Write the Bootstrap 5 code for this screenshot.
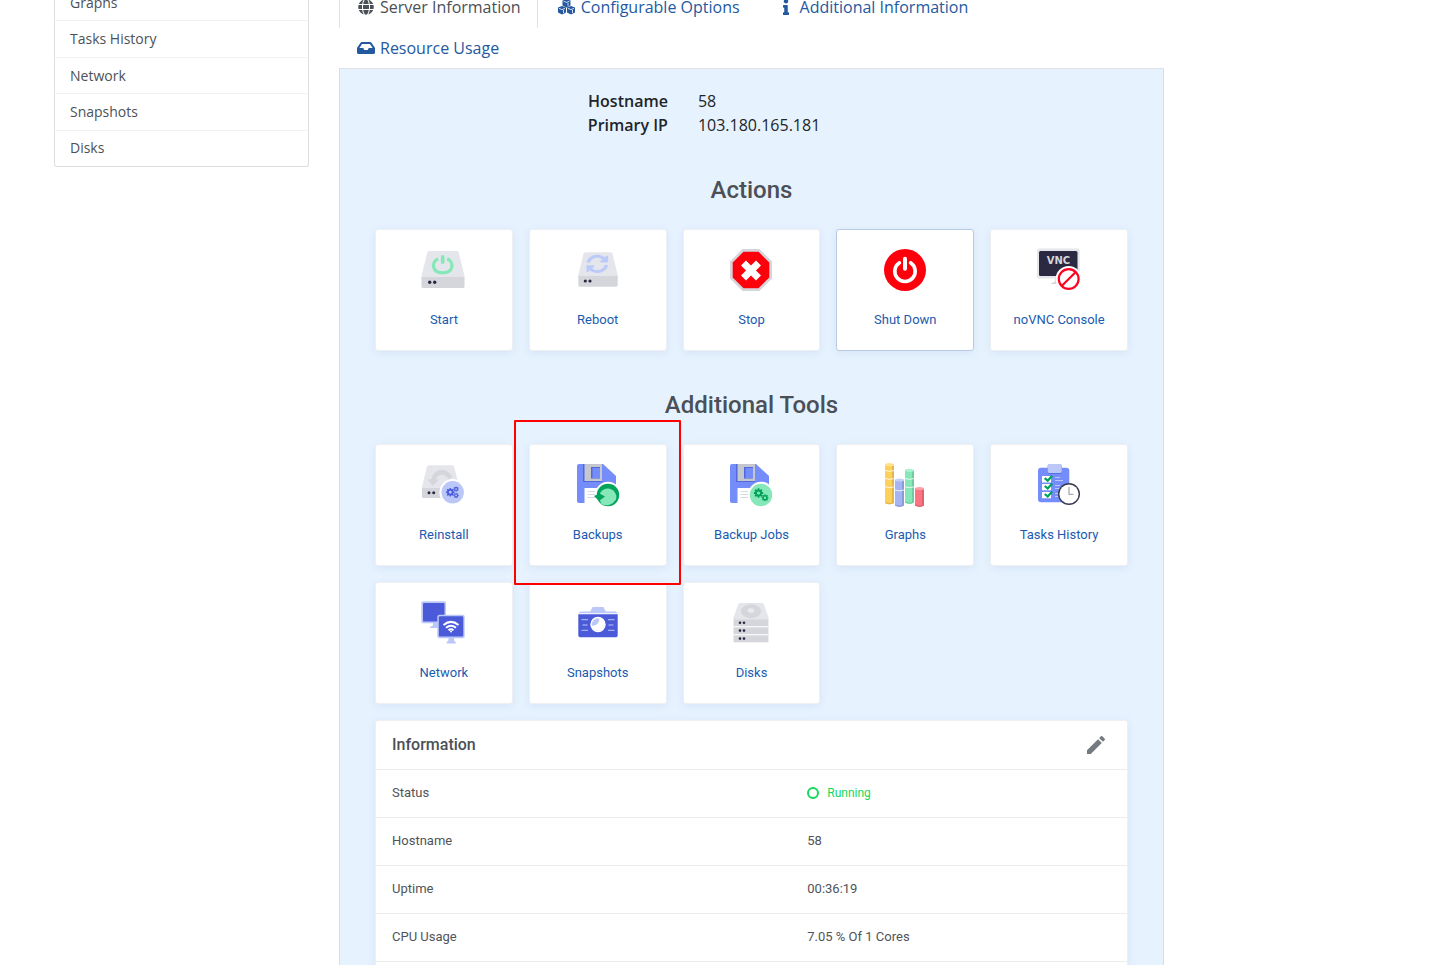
<!DOCTYPE html>
<html lang="en">
<head>
<meta charset="utf-8">
<meta name="viewport" content="width=device-width, initial-scale=1">
<title>Server Information</title>
<link href="https://cdn.jsdelivr.net/npm/bootstrap@5.3.0/dist/css/bootstrap.min.css" rel="stylesheet">
<style>
  body { font-family: "Open Sans", "Noto Sans", sans-serif; color: #212529; background: #fff; }
  .page-shell { max-width: 1140px; margin-left: 39px; --bs-gutter-x: 30px; }
  .page-shell > .row { --bs-gutter-x: 30px; }

  /* sidebar */
  .side-menu { --bs-list-group-border-color: #ddd; --bs-list-group-border-radius: 3px; height: 183px; margin-top: -16px; }
  .side-menu .list-group-item { display: flex; align-items: center; flex: 1 1 0; padding: 0 14px 0 15px; font-size: 14px; line-height: 20px; color: #4b5257; border-bottom-color: #f2f2f2; }
  .side-menu .list-group-item:last-child { border-bottom-color: #ddd; }

  /* tabs */
  .server-tabs { margin-top: -14px; --bs-nav-tabs-border-radius: 4px; --bs-nav-tabs-link-active-color: #495057; --bs-nav-link-color: #24599f; --bs-nav-tabs-link-active-border-color: #dee2e6 #dee2e6 #fff; }
  .server-tabs .nav-item { margin-right: 2px; }
  .server-tabs svg { width: 20px; height: 16px; fill: currentColor; }
  .server-tabs .nav-link { display: flex; align-items: center; gap: 4px; }

  .server-panel { background: #e6f2fe; border: 1px solid #dadee3; border-top: 0; padding: 20px 0; }
  .host-facts { --bs-gutter-x: 30px; margin: 0; }
  .host-facts dt { font-weight: 600; }
  .host-facts dd { margin: 0; }
  .module-area { font-family: Roboto, sans-serif; padding: 38px 35px 0; color: #505459; }
  .section-title { font-size: 24px; line-height: 30px; font-weight: 500; text-align: center; margin: 0 0 24px; color: #4b5057; }
  .tile-grid { display: grid; grid-template-columns: repeat(5, 1fr); gap: 16px; }
  .tile-grid + .section-title { margin-top: 39px; }
  .tile { height: 122px; padding: 16px 0 20px; gap: 16px; border: 1px solid #edeff2; border-radius: 3px; background: #fff; color: #1a5bb0; font-size: 13px; line-height: 20px; text-decoration: none; box-shadow: 0 2px 8px rgba(80, 110, 180, .1); }
  .tile svg { width: 48px; height: 48px; }
  .tile.is-hovered { border-color: #b9cbe2; }
  .highlight-box { position: absolute; inset: -24px -14px -19px -15px; border: 2px solid #f00; border-radius: 1px; z-index: 2; pointer-events: none; }

  .info-card { margin-top: 16px; border: 1px solid #edeff2; border-radius: 3px; background: #fff; box-shadow: 0 2px 8px rgba(80, 110, 180, .1); }
  .info-head { height: 48px; padding: 0 16px; }
  .info-head h3 { font-size: 16px; line-height: 24px; font-weight: 500; margin: 0; color: #4b5057; }
  .edit-btn { border: 0; background: none; padding: 0 3px; line-height: 0; }
  .edit-btn svg { width: 24px; height: 24px; fill: #757980; }
  .info-table { width: 100%; table-layout: fixed; font-size: 13px; line-height: 20px; }
  .info-table th { width: 55.3%; font-weight: 400; }
  .info-table th, .info-table td { height: 48px; padding: 0 16px 2px; border-top: 1px solid #ebecee; }
  .running { color: #12d95c; font-size: 12px; gap: 8px; }
  .running-dot { width: 12px; height: 12px; border: 2px solid #12d95c; border-radius: 50%; }
</style>
</head>
<body class="vh-100 overflow-hidden">

<svg class="d-none" aria-hidden="true">
  <defs>
    <symbol id="floppy" viewBox="0 0 48 48">
      <path fill="#758cfb" d="M5 3h24l13 12v27H5a2 2 0 0 1-2-2V5a2 2 0 0 1 2-2z"/>
      <path fill="#5068dc" d="M9 3h2v18H9z"/><path fill="#c5c7cf" d="M10.500 3H28v17H10.500z"/>
      <path fill="#5068dc" d="M10 20h18v1H10zM17 6h9v11.500h-9z"/><path fill="#758cfb" d="M18.500 7H26v10h-7.500z"/>
      <path fill="#fff" d="M10.500 27H42v16H10.500z"/>
      <path stroke="#d7d9de" d="M13.500 30.500H21M13.500 33.500H21M13.500 36.500H21"/>
    </symbol>
    <symbol id="gear" viewBox="-5 -5 10 10">
      <circle r="2.600" fill="none" stroke="currentColor" stroke-width="2"/>
      <path stroke="currentColor" stroke-width="1.800" d="M0-3v-1.800M0 3v1.800M3 0h1.800M-3 0h-1.800M2.200-2.200l1.200-1.200M-2.200 2.200l-1.200 1.200M2.200 2.200l1.200 1.200M-2.200-2.200l-1.200-1.200"/>
    </symbol>
  </defs>
</svg>

<div class="page-shell container-fluid">
  <div class="row">
    <aside class="col-3">
      <nav class="side-menu list-group" aria-label="Server menu">
        <a href="#" class="list-group-item">Graphs</a>
        <a href="#" class="list-group-item">Tasks History</a>
        <a href="#" class="list-group-item">Network</a>
        <a href="#" class="list-group-item">Snapshots</a>
        <a href="#" class="list-group-item">Disks</a>
      </nav>
    </aside>

    <main class="col-9">
      <ul class="server-tabs nav nav-tabs">
        <li class="nav-item"><a class="nav-link active" href="#"><svg viewBox="-8 0 512 512"><path d="M336.500 160C322 70.700 287.800 8 248 8s-74 62.700-88.500 152h177zM152 256c0 22.200 1.200 43.500 3.300 64h185.300c2.100-20.500 3.300-41.800 3.300-64s-1.200-43.500-3.300-64H155.300c-2.100 20.500-3.300 41.800-3.300 64zm324.700-96c-28.600-67.900-86.500-120.400-158-141.600 24.400 33.800 41.200 84.700 50 141.600h108zM177.200 18.400C105.800 39.600 47.800 92.100 19.300 160h108c8.700-56.900 25.500-107.800 49.900-141.600zM487.400 192H372.700c2.100 21 3.300 42.500 3.300 64s-1.200 43-3.300 64h114.600c5.500-20.500 8.600-41.800 8.600-64s-3.100-43.500-8.500-64zM120 256c0-21.500 1.200-43 3.300-64H8.600C3.200 212.500 0 233.800 0 256s3.200 43.500 8.600 64h114.600c-2-21-3.200-42.500-3.200-64zm39.500 96c14.500 89.300 48.700 152 88.500 152s74-62.700 88.500-152h-177zm159.300 141.600c71.400-21.200 129.400-73.700 158-141.600h-108c-8.800 56.900-25.600 107.800-50 141.600zM19.300 352c28.600 67.900 86.500 120.400 158 141.600-24.400-33.800-41.200-84.700-50-141.600h-108z"/></svg>Server Information</a></li>
        <li class="nav-item"><a class="nav-link" href="#"><svg viewBox="0 0 20 16"><path d="M9.500 0l4 1.500v5l-4 1.900-4-1.900v-5zM5 7l4 1.600v4.900L5 15.400l-4-1.900V8.600zM14 7l4 1.600v4.900l-4 1.900-4-1.900V8.600z"/><path fill="none" stroke="#fff" stroke-width=".8" d="M6.500 2.200l3 1.200 3-1.200M11 3.800v3M2 9.400l3 1.200 3-1.200M6.500 11v3M11 9.400l3 1.200 3-1.200M15.500 11v3"/></svg>Configurable Options</a></li>
        <li class="nav-item"><a class="nav-link" href="#"><svg viewBox="0 0 192 512"><path d="M20 424.229h20V279.771H20c-11.046 0-20-8.954-20-20V212c0-11.046 8.954-20 20-20h112c11.046 0 20 8.954 20 20v212.229h20c11.046 0 20 8.954 20 20V492c0 11.046-8.954 20-20 20H20c-11.046 0-20-8.954-20-20v-47.771c0-11.046 8.954-20 20-20zM96 0C56.235 0 24 32.235 24 72s32.235 72 72 72 72-32.235 72-72S135.764 0 96 0z"/></svg>Additional Information</a></li>
        <li class="nav-item"><a class="nav-link" href="#"><svg viewBox="0 0 576 512"><path d="M567.938 243.908L462.250 85.374A48.003 48.003 0 0 0 422.311 64H153.689a48 48 0 0 0-39.938 21.374L8.062 243.908A47.994 47.994 0 0 0 0 270.533V400c0 26.510 21.490 48 48 48h480c26.510 0 48-21.490 48-48V270.533a47.994 47.994 0 0 0-8.062-26.625zM162.252 128h251.497l85.333 128H376l-32 64H232l-32-64H76.918l85.334-128z"/></svg>Resource Usage</a></li>
      </ul>

      <div class="server-panel">
        <dl class="host-facts row">
          <dt class="col-5 text-end">Hostname</dt><dd class="col-7">58</dd>
          <dt class="col-5 text-end">Primary IP</dt><dd class="col-7">103.180.165.181</dd>
        </dl>

        <div class="module-area">
          <h2 class="section-title">Actions</h2>
          <div class="tile-grid">
            <a href="#" class="tile d-flex flex-column align-items-center">
              <svg viewBox="0 0 48 48"><path fill="#e5e6eb" d="M9.500 5h27a2.500 2.500 0 0 1 2.300 1.800L44.500 30v3h-43v-3L7.200 6.800A2.500 2.500 0 0 1 9.500 5z"/><path fill="#d5d6dc" d="M1.500 31h43v9.500a1.500 1.500 0 0 1-1.500 1.500H3a1.500 1.500 0 0 1-1.500-1.500z"/><circle cx="9.700" cy="36.300" r="1.700" fill="#2b2941"/><circle cx="14.700" cy="36.300" r="1.700" fill="#2b2941"/><path fill="none" stroke="#86e8b8" stroke-width="3.200" d="M18.200 12.800c-7.500 3.500-6.200 14 4.500 14s12-10.500 4.500-14"/><path stroke="#86e8b8" stroke-width="3.600" stroke-linecap="round" d="M22.700 10.800v5.500"/></svg>
              <span>Start</span></a>
            <a href="#" class="tile d-flex flex-column align-items-center">
              <svg viewBox="0 0 48 48"><path fill="#e5e6eb" d="M11.500 6.300h25a2.300 2.300 0 0 1 2 1.500L43.700 29v3H4.300v-3L9.500 7.800a2.300 2.300 0 0 1 2-1.500z"/><path fill="#d5d6dc" d="M4.300 30h39.400v9.300a1.500 1.500 0 0 1-1.500 1.400H5.800a1.500 1.500 0 0 1-1.500-1.400z"/><circle cx="11.300" cy="35" r="1.600" fill="#2b2941"/><circle cx="16" cy="35" r="1.600" fill="#2b2941"/><path fill="#bccafa" transform="translate(12.100 8.400) scale(.0437 .037)" d="M370.720 133.280C339.458 104.008 298.888 87.962 255.848 88c-77.458.068-144.328 53.178-162.791 126.850-1.344 5.363-6.122 9.150-11.651 9.150H24.103c-7.498 0-13.194-6.807-11.807-14.176C33.933 94.924 134.813 8 256 8c66.448 0 126.791 26.136 171.315 68.685L463.030 40.970C478.149 25.851 504 36.559 504 57.941V192c0 13.255-10.745 24-24 24H345.941c-21.382 0-32.090-25.851-16.971-40.971l41.750-41.749zM32 296h134.059c21.382 0 32.090 25.851 16.971 40.971l-41.750 41.750c31.262 29.273 71.835 45.319 114.876 45.280 77.418-.070 144.315-53.144 162.787-126.849 1.344-5.363 6.122-9.150 11.651-9.150h57.304c7.498 0 13.194 6.807 11.807 14.176C478.067 417.076 377.187 504 256 504c-66.448 0-126.791-26.136-171.315-68.685L48.970 471.030C33.851 486.149 8 475.441 8 454.059V320c0-13.255 10.745-24 24-24z"/></svg>
              <span>Reboot</span></a>
            <a href="#" class="tile d-flex flex-column align-items-center">
              <svg viewBox="0 0 48 48"><path fill="#d5d6dc" d="M15.500 3h17L45 15.500v17L32.500 45h-17L3 32.500v-17z"/><path fill="#fe000c" d="M16.500 5.700h15l10.800 10.800v15L31.500 42.300h-15L5.700 31.500v-15z"/><path stroke="#fff" stroke-width="7" d="M16.500 17l15 15M31.500 17l-15 15"/></svg>
              <span>Stop</span></a>
            <a href="#" class="tile is-hovered d-flex flex-column align-items-center">
              <svg viewBox="0 0 48 48"><circle cx="24" cy="24" r="21" fill="#fe000c"/><g fill="none" stroke="#fff" stroke-linecap="round"><path stroke-width="3.600" d="M18.400 16.800a10.200 10.200 0 1 0 11.200 0"/><path stroke-width="4" d="M24 12.700v10"/></g></svg>
              <span>Shut Down</span></a>
            <a href="#" class="tile d-flex flex-column align-items-center">
              <svg viewBox="0 0 48 48"><path fill="#d5d6dc" d="M20 32h8v4l3 2H16c0-2 4-1 4-3z"/><rect x="2" y="2.500" width="42.700" height="30" rx="2" fill="#e5e6eb"/><rect x="4" y="5" width="38.500" height="25" rx="1.500" fill="#2b2941"/><text x="23.500" y="17.500" fill="#d5d6dc" font-family="DejaVu Sans, sans-serif" font-weight="700" font-size="10" text-anchor="middle">VNC</text><circle cx="33.700" cy="33" r="13" fill="#fff"/><g fill="none" stroke="#fe0020" stroke-width="2.200"><circle cx="33.700" cy="33" r="9.900"/><path d="M26.700 40l14-14"/></g></svg>
              <span>noVNC Console</span></a>
          </div>

          <h2 class="section-title">Additional Tools</h2>
          <div class="tile-grid">
            <a href="#" class="tile d-flex flex-column align-items-center">
              <svg viewBox="0 0 48 48"><path fill="#e5e6eb" d="M9 4.300h23a2.500 2.500 0 0 1 2.200 1.700l5 20v2H2v-2L6.900 6A2.500 2.500 0 0 1 9 4.300z"/><path fill="#d5d6dc" d="M2 27h37v10H3.500A1.500 1.500 0 0 1 2 35.500zM7.300 18.300h4.200C13 7.500 27 5.500 32.500 16l-4 2.500C25.500 12 17.500 12.500 16 18.300h3L13 25z"/><circle cx="9" cy="31.700" r="1.500" fill="#2b2941"/><circle cx="13.700" cy="31.700" r="1.500" fill="#2b2941"/><circle cx="32.700" cy="31.300" r="13.300" fill="#fff"/><circle cx="32.700" cy="31.300" r="11.200" fill="#bbc8f7"/><g color="#4a5ad8"><use href="#gear" x="25.800" y="26.800" width="9" height="9"/><use href="#gear" x="33.300" y="25.300" width="5.600" height="5.600"/><use href="#gear" x="33.300" y="31.600" width="5.600" height="5.600"/></g></svg>
              <span>Reinstall</span></a>
            <div class="position-relative">
              <a href="#" class="tile d-flex flex-column align-items-center">
                <svg viewBox="0 0 48 48"><use href="#floppy" width="48" height="48"/><circle cx="34" cy="34" r="13.200" fill="#fff"/><circle cx="34" cy="34" r="11.200" fill="#00a35b"/><path fill="#86e8b8" d="M25.500 38.500A8.600 8.600 0 1 1 42 38.500 11 11 0 0 1 27.500 43z"/><path fill="#00a35b" d="M20 35l5.500-2.500L31 35.500l-6 4.500z"/></svg>
                <span>Backups</span></a>
              <div class="highlight-box"></div>
            </div>
            <a href="#" class="tile d-flex flex-column align-items-center">
              <svg viewBox="0 0 48 48"><use href="#floppy" width="48" height="48"/><circle cx="34" cy="34" r="13.200" fill="#fff"/><circle cx="34" cy="34" r="11.200" fill="#86e8b8"/><g color="#00a35b"><use href="#gear" x="26.500" y="27" width="10" height="10"/><use href="#gear" x="34.300" y="33" width="7.400" height="7.400"/></g></svg>
              <span>Backup Jobs</span></a>
            <a href="#" class="tile d-flex flex-column align-items-center">
              <svg viewBox="0 0 48 48">
                <path fill="#fcd059" d="M4 3.500h9v38.500q-4.500 2.500-9 0z"/><path fill="#e0b74e" d="M11 5h2v37q-1 .6-2 .8zM4 41q4.500 2 9 0v1q-4.500 2.500-9 0z"/><ellipse cx="8.500" cy="3.700" rx="4.500" ry="1.600" fill="#ffe08c"/>
                <path fill="#a5b4f2" d="M14 19h9v25.500q-4.500 2.500-9 0z"/><path fill="#8c9ad8" d="M21 20h2v24.500q-1 .6-2 .8zM14 43.500q4.500 2 9 0v1q-4.500 2.500-9 0z"/><ellipse cx="18.500" cy="19" rx="4.500" ry="1.600" fill="#c4cffa"/>
                <path fill="#86e8b8" d="M24 9h9v32.500q-4.500 2.500-9 0z"/><path fill="#72cba0" d="M31 10h2v31.500q-1 .6-2 .8zM24 40.500q4.500 2 9 0v1q-4.500 2.500-9 0z"/><ellipse cx="28.500" cy="9.300" rx="4.500" ry="1.600" fill="#abf3d0"/>
                <path fill="#fd7382" d="M34 27.500h9v17q-4.500 2.500-9 0z"/><path fill="#db6372" d="M41 28.500h2v16q-1 .6-2 .8zM34 43.500q4.500 2 9 0v1q-4.500 2.500-9 0z"/><ellipse cx="38.500" cy="27.500" rx="4.500" ry="1.600" fill="#ff9da7"/>
                <path fill="none" stroke="#fff" stroke-width=".8" d="M4 9.500q4.500 1.800 9 0M4 17.500q4.500 1.800 9 0M4 25.800q4.500 1.800 9 0M14 29q4.500 1.800 9 0M24 17.500q4.500 1.800 9 0M24 25.800q4.500 1.800 9 0"/></svg>
              <span>Graphs</span></a>
            <a href="#" class="tile d-flex flex-column align-items-center">
              <svg viewBox="0 0 48 48"><rect x="3" y="6.700" width="31.300" height="34.500" rx="3" fill="#758cfb"/><rect x="12.700" y="3.500" width="14" height="9.500" rx="1.500" fill="#5b73e0"/><rect x="12.700" y="3" width="14" height="9" rx="1.500" fill="#bbc8f7"/><path fill="#fff" d="M7 15h9v6.500H7zM7 23h9v6.300H7zM7 31h9v6.300H7z"/><path fill="none" stroke="#00a35b" stroke-width="2.200" d="M9.700 17.200l3 2.500 4.500-5M9.700 25l3 2.500 4.500-5M9.700 33l3 2.500 4.500-5"/><path stroke="#bbc8f7" d="M20 16.500h5M20 19.500h8M20 24.500h5M20 27.500h5M20 32.500h3M20 35.500h3"/><circle cx="34" cy="33" r="11" fill="#3b394f"/><circle cx="34" cy="33" r="9.600" fill="#fff"/><path fill="none" stroke="#a9abb3" stroke-width="1.300" d="M34 26v7.300h4.500"/></svg>
              <span>Tasks History</span></a>
            <a href="#" class="tile d-flex flex-column align-items-center">
              <svg viewBox="0 0 48 48"><path fill="#bbc8f7" d="M13 24h6v5h-9v-1l3-1.500z"/><rect x="1.300" y="2.300" width="24.700" height="22" rx="1.500" fill="#bbc8f7"/><rect x="3" y="4" width="21.500" height="18.500" rx="1" fill="#4a5ad8"/><path fill="#bbc8f7" d="M28.500 38h5.500v3.500l1.700 1.500v1.500h-9V43l1.800-1.500z"/><rect x="17.300" y="15.700" width="27.400" height="23.500" rx="2" fill="#bbc8f7"/><rect x="18.800" y="17.200" width="24.500" height="20.300" rx="1.200" fill="#4a5ad8"/><g fill="none" stroke="#fff" stroke-width="2"><path d="M23.500 26q7.500-6.200 15 0M26 28.800q5-4.200 10 0M28.500 31.300q2.500-2 5 0"/></g><circle cx="31" cy="32.400" r="1" fill="#fff"/></svg>
              <span>Network</span></a>
            <a href="#" class="tile d-flex flex-column align-items-center">
              <svg viewBox="0 0 48 48"><path fill="#bbc8f7" d="M18.500 8h11l2.200 4.500h10l2 1.700H4.300l2-1.700h10z"/><path fill="#4a5ad8" d="M4.300 15.200h39.400v20.500a2.500 2.500 0 0 1-2.500 2.600H6.800a2.500 2.500 0 0 1-2.500-2.600z"/><circle cx="24" cy="25.500" r="7.700" fill="#fff"/><circle cx="24" cy="25.500" r="6.200" fill="#bbc8f7"/><path fill="#fff" d="M25.500 19.300a6.300 6.300 0 1 1-7.700 7.500q7 .5 7.700-7.500z"/><path stroke="#bbc8f7" d="M7.500 20.700h6.500M8.500 26h5M7.500 31.300h6.500M34 20.700h6.500M34.500 26h5M34 31.300h6.500"/></svg>
              <span>Snapshots</span></a>
            <a href="#" class="tile d-flex flex-column align-items-center">
              <svg viewBox="0 0 48 48"><path fill="#e5e6eb" d="M12.500 4h23l1.200 1L41.700 19v23.500a1 1 0 0 1-1 1H7.300a1 1 0 0 1-1-1V19L11.300 5z"/><path fill="#d5d6dc" d="M7 20.500h34V27H7zM7 28.500h34V35H7zM7 36.500h34V43H7z"/><path stroke="#fff" stroke-width=".8" d="M6.500 27.700h35M6.500 35.700h35"/><ellipse cx="24" cy="12.300" rx="10" ry="7" fill="#d5d6dc"/><ellipse cx="24" cy="11.500" rx="3.300" ry="2.300" fill="#e9eaee"/><g fill="#2b2941"><circle cx="13" cy="23.700" r="1.300"/><circle cx="17" cy="23.700" r="1.300"/><circle cx="13" cy="31.600" r="1.300"/><circle cx="17" cy="31.600" r="1.300"/><circle cx="13" cy="39.600" r="1.300"/><circle cx="17" cy="39.600" r="1.300"/></g></svg>
              <span>Disks</span></a>
          </div>

          <section class="info-card">
            <div class="info-head d-flex align-items-center justify-content-between">
              <h3>Information</h3>
              <button type="button" class="edit-btn" aria-label="Edit"><svg viewBox="0 0 24 24"><path d="M3 17.250V21h3.750L17.810 9.940l-3.750-3.750L3 17.250zM20.710 7.040a1 1 0 0 0 0-1.410l-2.340-2.340a1 1 0 0 0-1.410 0l-1.830 1.830 3.750 3.750 1.830-1.830z"/></svg></button>
            </div>
            <table class="info-table">
              <tbody>
                <tr><th scope="row">Status</th><td><span class="running d-flex align-items-center"><span class="running-dot"></span>Running</span></td></tr>
                <tr><th scope="row">Hostname</th><td>58</td></tr>
                <tr><th scope="row">Uptime</th><td>00:36:19</td></tr>
                <tr><th scope="row">CPU Usage</th><td>7.05 % Of 1 Cores</td></tr>
                <tr><th scope="row"></th><td></td></tr>
              </tbody>
            </table>
          </section>
        </div>
      </div>
    </main>
  </div>
</div>
<script src="https://cdn.jsdelivr.net/npm/bootstrap@5.3.0/dist/js/bootstrap.bundle.min.js"></script>
</body>
</html>
